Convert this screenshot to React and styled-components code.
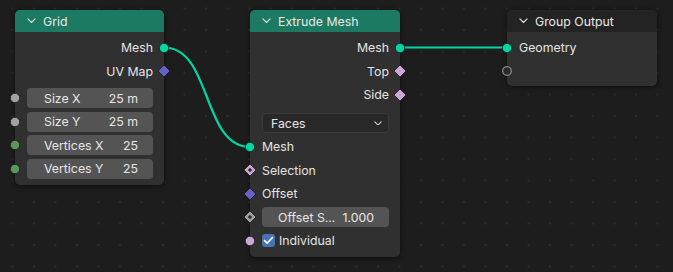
import styled, { createGlobalStyle } from "styled-components";

const GlobalStyle = createGlobalStyle`
  html, body {
    margin: 0;
    padding: 0;
    background: #1d1d1d;
  }
  body {
    font-family: Inter, "Noto Sans", sans-serif;
  }
`;

const colors = {
  geometry: "#00d6a3",
  vector: "#6363c7",
  bool: "#cca6d6",
  float: "#a1a1a1",
  int: "#5a975a",
  empty: "#8a8a8a",
};

const Canvas = styled.div`
  position: relative;
  width: 673px;
  height: 272px;
  overflow: hidden;
  background-color: #1d1d1d;
  background-image: radial-gradient(circle, #2a2a2a 0.9px, transparent 1.2px);
  background-size: 21.5px 21.5px;
  background-position: 1.75px -2.25px;
`;

const Links = styled.svg`
  position: absolute;
  left: 0;
  top: 0;
  width: 673px;
  height: 272px;
  pointer-events: none;
`;

const Node = styled.div`
  position: absolute;
  left: ${(p) => p.$x}px;
  top: ${(p) => p.$y}px;
  width: ${(p) => p.$w}px;

  display: flex;
  flex-direction: column;

  border-radius: 5px;
  background: #303030;
  box-shadow: 0 1px 5px rgba(0, 0, 0, 0.55);
`;

const Header = styled.div`
  display: flex;
  align-items: center;

  height: 22px;
  padding-left: 12px;
  gap: 7px;

  border-radius: 5px 5px 0 0;
  background: ${(p) => p.$color};

  color: #e8e8e8;
  font-size: 12.3px;
`;

const Body = styled.div`
  display: flex;
  flex-direction: column;
  padding: 4px 0 ${(p) => p.$pb || 4.5}px;
`;

const Row = styled.div`
  position: relative;
  display: flex;
  align-items: center;
  justify-content: ${(p) => (p.$out ? "flex-end" : "flex-start")};

  height: 23.5px;
  padding: 0 11px 0 12px;
  margin-top: ${(p) => p.$mt || 0}px;
  gap: 4px;

  color: #e4e4e4;
  font-size: 12.3px;
`;

const SocketWrap = styled.span`
  position: absolute;
  top: 50%;
  ${(p) => (p.$out ? "right" : "left")}: -6px;
  width: 12px;
  height: 12px;
  margin-top: -6px;
  display: block;
`;

const Field = styled.div`
  flex: 1;
  display: flex;
  align-items: center;
  justify-content: space-between;

  height: 20px;
  padding: 0 15px 0 ${(p) => p.$pl || 17}px;

  border-radius: 4px;
  background: #545454;

  color: #e6e6e6;
  font-size: 12.3px;
`;

const Dropdown = styled.div`
  flex: 1;
  display: flex;
  align-items: center;
  justify-content: space-between;

  height: 20px;
  padding: 0 6px 0 8px;

  box-sizing: border-box;
  border: 1px solid #3a3a3a;
  border-radius: 4px;
  background: #282828;

  color: #e6e6e6;
  font-size: 12.3px;
`;

const Check = styled.span`
  display: flex;
  align-items: center;
  justify-content: center;

  width: 13px;
  height: 13px;

  border-radius: 3px;
  background: #4772b3;
`;

function Socket({ type, color, out }) {
  let shape;
  if (type === "circle") {
    shape = <circle cx="6" cy="6" r="4.7" fill={color} stroke="#1a1a1a" strokeWidth="0.8" />;
  } else if (type === "hollow") {
    shape = <circle cx="6" cy="6" r="4.3" fill="#2a2a2a" stroke={color} strokeWidth="1.3" />;
  } else if (type === "diamond") {
    shape = <path d="M6 0 L12 6 L6 12 L0 6 Z" fill={color} stroke="#1a1a1a" strokeWidth="0.8" />;
  } else {
    shape = (
      <>
        <path d="M6 0 L12 6 L6 12 L0 6 Z" fill={color} stroke="#1a1a1a" strokeWidth="0.8" />
        <path d="M6 3.8 L8.2 6 L6 8.2 L3.8 6 Z" fill="#303030" />
      </>
    );
  }
  return (
    <SocketWrap $out={out}>
      <svg width="12" height="12" viewBox="0 0 12 12" overflow="visible">
        {shape}
      </svg>
    </SocketWrap>
  );
}

function Chevron({ size = 9 }) {
  return (
    <svg width={size} height={size * 0.6} viewBox="0 0 10 6">
      <path d="M1 1 L5 5 L9 1" fill="none" stroke="#dcdcdc" strokeWidth="1.3" strokeLinecap="round" strokeLinejoin="round" />
    </svg>
  );
}

function NumField({ label, value, pl }) {
  return (
    <Field $pl={pl}>
      <span>{label}</span>
      <span>{value}</span>
    </Field>
  );
}

export default function App() {
  return (
    <>
      <GlobalStyle />
      <Canvas>
        <Links viewBox="0 0 673 272">
          <path d="M164 47.5 C 212 47.5, 202 147, 250 147" fill="none" stroke={colors.geometry} strokeWidth="2.2" />
          <path d="M400 47.5 L507 47.5" fill="none" stroke={colors.geometry} strokeWidth="2.2" />
        </Links>

        <Node $x={15} $y={10} $w={149}>
          <Header $color="#1d7a62">
            <Chevron />
            Grid
          </Header>
          <Body>
            <Row $out>
              Mesh
              <Socket out type="circle" color={colors.geometry} />
            </Row>
            <Row $out>
              UV Map
              <Socket out type="diamond" color={colors.vector} />
            </Row>
            <Row $mt={3.25}>
              <Socket type="circle" color={colors.float} />
              <NumField label="Size X" value="25 m" />
            </Row>
            <Row>
              <Socket type="circle" color={colors.float} />
              <NumField label="Size Y" value="25 m" />
            </Row>
            <Row>
              <Socket type="circle" color={colors.int} />
              <NumField label="Vertices X" value="25" />
            </Row>
            <Row>
              <Socket type="circle" color={colors.int} />
              <NumField label="Vertices Y" value="25" />
            </Row>
          </Body>
        </Node>

        <Node $x={250} $y={10} $w={150}>
          <Header $color="#1d7a62">
            <Chevron />
            Extrude Mesh
          </Header>
          <Body>
            <Row $out>
              Mesh
              <Socket out type="circle" color={colors.geometry} />
            </Row>
            <Row $out>
              Top
              <Socket out type="diamond" color={colors.bool} />
            </Row>
            <Row $out>
              Side
              <Socket out type="diamond" color={colors.bool} />
            </Row>
            <Row $mt={4.75}>
              <Dropdown>
                <span>Faces</span>
                <Chevron size={8} />
              </Dropdown>
            </Row>
            <Row>
              <Socket type="circle" color={colors.geometry} />
              Mesh
            </Row>
            <Row>
              <Socket type="field" color={colors.bool} />
              Selection
            </Row>
            <Row>
              <Socket type="diamond" color={colors.vector} />
              Offset
            </Row>
            <Row>
              <Socket type="field" color={colors.float} />
              <NumField label="Offset S..." value="1.000" pl={16} />
            </Row>
            <Row>
              <Socket type="circle" color={colors.bool} />
              <Check>
                <svg width="11" height="9" viewBox="0 0 11 9">
                  <path d="M1.5 4.5 L4.2 7.2 L9.5 1.5" fill="none" stroke="#ffffff" strokeWidth="1.7" strokeLinecap="round" strokeLinejoin="round" />
                </svg>
              </Check>
              Individual
            </Row>
          </Body>
        </Node>

        <Node $x={507} $y={10} $w={150}>
          <Header $color="#232323">
            <Chevron />
            Group Output
          </Header>
          <Body $pb={3}>
            <Row>
              <Socket type="circle" color={colors.geometry} />
              Geometry
            </Row>
            <Row>
              <Socket type="hollow" color={colors.empty} />
            </Row>
          </Body>
        </Node>
      </Canvas>
    </>
  );
}
